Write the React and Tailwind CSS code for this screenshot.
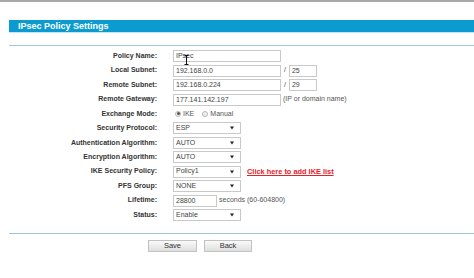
function Arrow() {
  return (
    <svg width="4" height="4" viewBox="0 0 4 4" className="ml-auto mr-[6px]">
      <path d="M0 0.5 L4 0.5 L2 3.5 Z" fill="#222" />
    </svg>
  );
}

function TextBox({ value, w = "w-[108px]", cursor }) {
  return (
    <div className={`relative h-[12px] ${w} border border-[#c9c9c9] bg-white px-[2px] text-[7px] leading-[10px] text-[#444]`}>
      {value}
      {cursor && (
        <svg width="5" height="10" viewBox="0 0 5 10" className="absolute left-[10px] top-[4px]">
          <path d="M0.5 0.5 H4.5 M2.5 0.5 V9.5 M0.5 9.5 H4.5" stroke="#111" strokeWidth="1" fill="none" />
        </svg>
      )}
    </div>
  );
}

function SelectBox({ value }) {
  return (
    <div className="flex h-[12px] w-[68px] items-center border border-[#c9c9c9] bg-white pl-[2px] text-[7px] text-[#444]">
      <span>{value}</span>
      <Arrow />
    </div>
  );
}

function Radio({ checked, label }) {
  return (
    <label className="flex items-center gap-[2px] text-[7px] text-[#555]">
      <span className="flex h-[6px] w-[6px] items-center justify-center rounded-full border border-[#b8b8b8] bg-[#eeeeee]">
        {checked && <span className="h-[3px] w-[3px] rounded-full bg-[#555]" />}
      </span>
      {label}
    </label>
  );
}

function Row({ label, children }) {
  return (
    <div className="flex h-[14.45px] items-center">
      <div className="w-[148px] text-right text-[7px] font-bold text-[#333]">{label}</div>
      <div className="ml-[16px] flex items-center">{children}</div>
    </div>
  );
}

export default function App() {
  return (
    <div className="h-[278px] w-[474px] overflow-hidden bg-white font-['Liberation_Sans',Arial,sans-serif]">
      <div className="h-[2px] bg-[#a9a9a9]" />

      <div className="pl-[9px] pt-[18px]">
        {/* Title bar */}
        <div className="h-[13px] border-b border-[#c4e6f3] bg-[#0b9bd0] pl-[9px] text-[9px] font-bold leading-[12px] text-white">
          IPsec Policy Settings
        </div>

        <div className="mt-[12px] h-px bg-[#9fc6d6]" />

        {/* Form */}
        <div className="mt-[3px]">
          <Row label="Policy Name:">
            <TextBox value="IPsec" cursor />
          </Row>
          <Row label="Local Subnet:">
            <TextBox value="192.168.0.0" />
            <span className="mx-[3px] text-[7px] text-[#444]">/</span>
            <TextBox value="25" w="w-[28px]" />
          </Row>
          <Row label="Remote Subnet:">
            <TextBox value="192.168.0.224" />
            <span className="mx-[3px] text-[7px] text-[#444]">/</span>
            <TextBox value="29" w="w-[28px]" />
          </Row>
          <Row label="Remote Gateway:">
            <TextBox value="177.141.142.197" />
            <span className="ml-[2px] text-[7px] text-[#555]">(IP or domain name)</span>
          </Row>
          <Row label="Exchange Mode:">
            <div className="ml-[2px] flex items-center gap-[8px]">
              <Radio checked label="IKE" />
              <Radio label="Manual" />
            </div>
          </Row>
          <Row label="Security Protocol:">
            <SelectBox value="ESP" />
          </Row>
          <Row label="Authentication Algorithm:">
            <SelectBox value="AUTO" />
          </Row>
          <Row label="Encryption Algorithm:">
            <SelectBox value="AUTO" />
          </Row>
          <Row label="IKE Security Policy:">
            <SelectBox value="Policy1" />
            <a href="#" className="ml-[6px] text-[7.4px] font-bold text-[#e8202a] underline">
              Click here to add IKE list
            </a>
          </Row>
          <Row label="PFS Group:">
            <SelectBox value="NONE" />
          </Row>
          <Row label="Lifetime:">
            <TextBox value="28800" w="w-[44px]" />
            <span className="ml-[2px] text-[7px] text-[#555]">seconds (60-604800)</span>
          </Row>
          <Row label="Status:">
            <SelectBox value="Enable" />
          </Row>
        </div>

        <div className="mt-[11px] h-px bg-[#9fc6d6]" />

        {/* Buttons */}
        <div className="mt-[6px] flex gap-[7px] pl-[139px]">
          <button className="h-[12px] w-[49px] border border-[#c2c2c2] bg-gradient-to-b from-[#fafafa] to-[#dedede] text-[7.5px] leading-[10px] text-[#333]">
            Save
          </button>
          <button className="h-[12px] w-[48px] border border-[#c2c2c2] bg-gradient-to-b from-[#fafafa] to-[#dedede] text-[7.5px] leading-[10px] text-[#333]">
            Back
          </button>
        </div>
      </div>
    </div>
  );
}
